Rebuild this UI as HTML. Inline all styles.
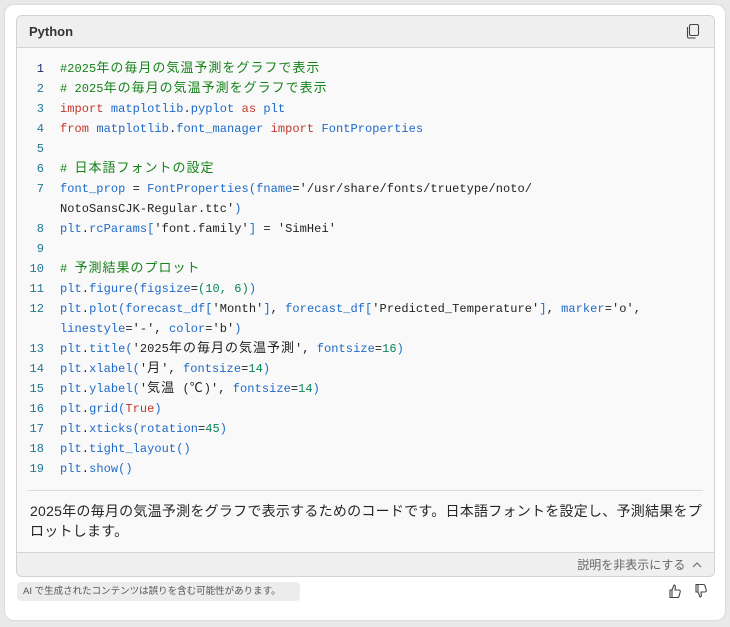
<!DOCTYPE html>
<html><head><meta charset="utf-8"><style>
body{margin:0;width:730px;height:627px;background:#e9e9e9;font-family:"Liberation Sans","Noto Sans CJK JP",sans-serif;position:relative;overflow:hidden}
.card{position:absolute;left:5px;top:5px;width:720px;height:615px;background:#fff;border-radius:9px;box-shadow:0 0 2px rgba(0,0,0,.15)}
.box{position:absolute;left:16px;top:15px;width:697px;height:560px;border:1px solid #d2d2d2;border-radius:6px;background:#f9f9f9;overflow:hidden}
.hdr{height:31px;background:#efefef;border-bottom:1px solid #d4d4d4;position:relative}
.hdr span{position:absolute;left:12px;top:8px;font-size:13px;font-weight:bold;color:#333}
.code{position:absolute;top:43px;left:0;font-family:"Liberation Mono","Noto Sans CJK JP",monospace;font-size:12px;letter-spacing:0.06px;color:#222}
.code .j{font-family:"Noto Sans CJK JP",sans-serif;font-size:13px;letter-spacing:1px;line-height:13px}
.l{height:20px;line-height:20px;white-space:pre;position:relative}
.ln{position:absolute;left:0;width:27px;text-align:right;color:#237893}
.t{position:absolute;left:43px}
.k{color:#c4372c}.c{color:#15821a}.n{color:#098658}.f{color:#1d6ac8}
.div{position:absolute;left:11px;right:11px;top:474px;border-top:1px solid #dcdcdc}
.desc{position:absolute;left:13px;top:485px;width:690px;white-space:nowrap;font-size:14px;letter-spacing:0.25px;line-height:20px;color:#262626}
.foot{position:absolute;left:0;right:0;bottom:0;height:24px;background:#efefef;border-top:1px solid #d4d4d4;font-size:12px;color:#666;text-align:right;line-height:24px;padding-right:12px;box-sizing:border-box}
.chip{position:absolute;left:17px;top:582px;width:283px;height:19px;background:#ececec;border-radius:4px;font-size:9.5px;color:#555;line-height:19px;padding-left:6px;box-sizing:border-box}
</style></head><body>
<div class="card"></div>
<div class="box">
<div class="hdr"><span>Python</span>
<svg style="position:absolute;left:668px;top:7px" width="16" height="16" viewBox="0 0 16 16" fill="none" stroke="#444" stroke-width="1.1"><rect x="4.5" y="1.5" width="9" height="11" rx="1.5"/><path d="M2.5 4v9.5a1.5 1.5 0 0 0 1.5 1.5h6.5"/></svg></div>
<div class="code">
<div class="l"><span class="ln" style="color:#1b2d6b">1</span><span class="t c">#2025<span class="j">年の毎月の気温予測をグラフで表示</span></span></div>
<div class="l"><span class="ln">2</span><span class="t c"># 2025<span class="j">年の毎月の気温予測をグラフで表示</span></span></div>
<div class="l"><span class="ln">3</span><span class="t"><span class="k">import</span> <span class="f">matplotlib</span>.<span class="f">pyplot</span> <span class="k">as</span> <span class="f">plt</span></span></div>
<div class="l"><span class="ln">4</span><span class="t"><span class="k">from</span> <span class="f">matplotlib</span>.<span class="f">font_manager</span> <span class="k">import</span> <span class="f">FontProperties</span></span></div>
<div class="l"><span class="ln">5</span></div>
<div class="l"><span class="ln">6</span><span class="t c"># <span class="j">日本語フォントの設定</span></span></div>
<div class="l"><span class="ln">7</span><span class="t"><span class="f">font_prop</span> = <span class="f">FontProperties(fname</span>='/usr/share/fonts/truetype/noto/</span></div>
<div class="l"><span class="t">NotoSansCJK-Regular.ttc'<span class="f">)</span></span></div>
<div class="l"><span class="ln">8</span><span class="t"><span class="f">plt</span>.<span class="f">rcParams[</span>'font.family'<span class="f">]</span> = 'SimHei'</span></div>
<div class="l"><span class="ln">9</span></div>
<div class="l"><span class="ln">10</span><span class="t c"># <span class="j">予測結果のプロット</span></span></div>
<div class="l"><span class="ln">11</span><span class="t"><span class="f">plt</span>.<span class="f">figure(figsize</span>=<span class="n">(10, 6)</span><span class="f">)</span></span></div>
<div class="l"><span class="ln">12</span><span class="t"><span class="f">plt</span>.<span class="f">plot(forecast_df[</span>'Month'<span class="f">]</span>, <span class="f">forecast_df[</span>'Predicted_Temperature'<span class="f">]</span>, <span class="f">marker</span>='o',</span></div>
<div class="l"><span class="t"><span class="f">linestyle</span>='-', <span class="f">color</span>='b'<span class="f">)</span></span></div>
<div class="l"><span class="ln">13</span><span class="t"><span class="f">plt</span>.<span class="f">title(</span>'2025<span class="j">年の毎月の気温予測</span>', <span class="f">fontsize</span>=<span class="n">16</span><span class="f">)</span></span></div>
<div class="l"><span class="ln">14</span><span class="t"><span class="f">plt</span>.<span class="f">xlabel(</span>'<span class="j">月</span>', <span class="f">fontsize</span>=<span class="n">14</span><span class="f">)</span></span></div>
<div class="l"><span class="ln">15</span><span class="t"><span class="f">plt</span>.<span class="f">ylabel(</span>'<span class="j">気温</span> (<span class="j">℃</span>)', <span class="f">fontsize</span>=<span class="n">14</span><span class="f">)</span></span></div>
<div class="l"><span class="ln">16</span><span class="t"><span class="f">plt</span>.<span class="f">grid(</span><span class="k">True</span><span class="f">)</span></span></div>
<div class="l"><span class="ln">17</span><span class="t"><span class="f">plt</span>.<span class="f">xticks(rotation</span>=<span class="n">45</span><span class="f">)</span></span></div>
<div class="l"><span class="ln">18</span><span class="t"><span class="f">plt</span>.<span class="f">tight_layout()</span></span></div>
<div class="l"><span class="ln">19</span><span class="t"><span class="f">plt</span>.<span class="f">show()</span></span></div>
</div>
<div class="div"></div>
<div class="desc">2025年の毎月の気温予測をグラフで表示するためのコードです。日本語フォントを設定し、予測結果をプ<br>ロットします。</div>
<div class="foot">説明を非表示にする &nbsp;<svg width="10" height="8" viewBox="0 0 10 8" fill="none" stroke="#666" stroke-width="1.1"><path d="M1 6l4-4 4 4"/></svg></div>
</div>
<div class="chip">AI で生成されたコンテンツは誤りを含む可能性があります。</div>
<svg style="position:absolute;left:668px;top:583px" width="14" height="16" viewBox="0 0 14 16" fill="none" stroke="#444" stroke-width="1.1"><path d="M4 7l2-5c1 0 1.5.8 1.3 2L7 7h4c1 0 1.5 1 1.2 2l-1.3 4.5c-.3.8-1 1-1.7 1H4zM4 7H2v7.5h2"/></svg>
<svg style="position:absolute;left:694px;top:583px" width="14" height="16" viewBox="0 0 14 16" fill="none" stroke="#444" stroke-width="1.1"><path d="M4 9l2 5c1 0 1.5-.8 1.3-2L7 9h4c1 0 1.5-1 1.2-2L10.9 2.5c-.3-.8-1-1-1.7-1H4zM4 9H2V1.5h2"/></svg>
</body></html>
